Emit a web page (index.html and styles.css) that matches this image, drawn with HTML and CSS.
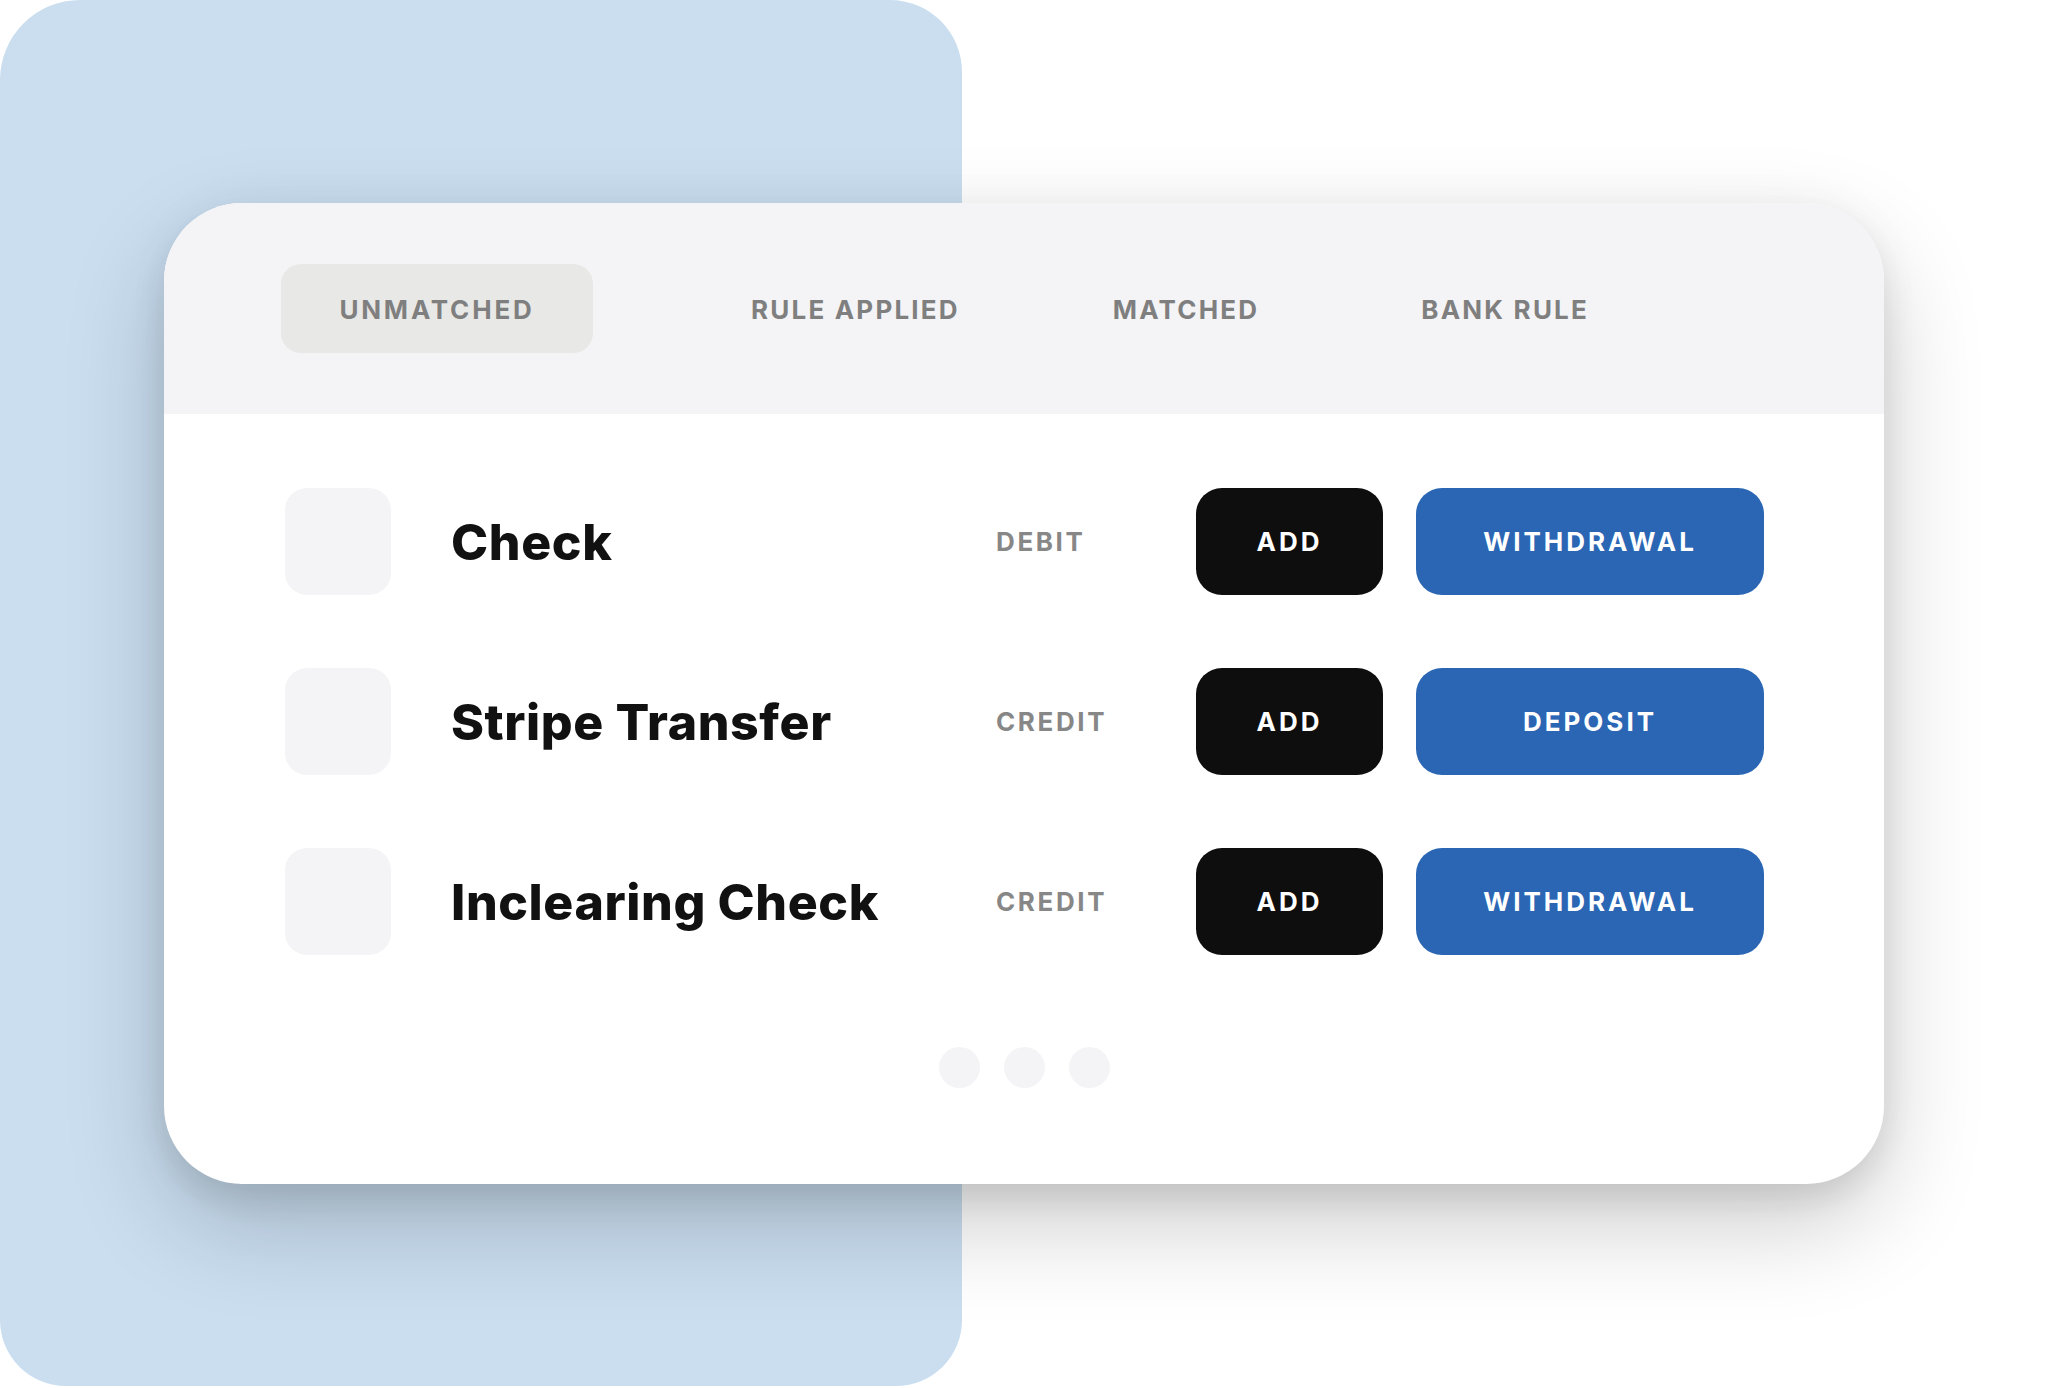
FILE: index.html
```html
<!DOCTYPE html>
<html lang="en">
<head>
<meta charset="utf-8">
<title>Bank reconciliation</title>
<link rel="stylesheet" href="styles.css">
</head>
<body>
<div class="stage">
  <div class="backdrop"></div>
  <section class="card">
    <header class="tabs">
      <div class="tab active">UNMATCHED</div>
      <div class="tab">RULE APPLIED</div>
      <div class="tab">MATCHED</div>
      <div class="tab">BANK RULE</div>
    </header>
    <div class="list">
      <div class="row">
        <div class="check"></div>
        <div class="title">Check</div>
        <div class="kind">DEBIT</div>
        <div class="btn btn-add">ADD</div>
        <div class="btn btn-main">WITHDRAWAL</div>
      </div>
      <div class="row">
        <div class="check"></div>
        <div class="title">Stripe Transfer</div>
        <div class="kind">CREDIT</div>
        <div class="btn btn-add">ADD</div>
        <div class="btn btn-main">DEPOSIT</div>
      </div>
      <div class="row">
        <div class="check"></div>
        <div class="title">Inclearing Check</div>
        <div class="kind">CREDIT</div>
        <div class="btn btn-add">ADD</div>
        <div class="btn btn-main">WITHDRAWAL</div>
      </div>
    </div>
    <div class="dots">
      <span class="dot"></span>
      <span class="dot"></span>
      <span class="dot"></span>
    </div>
  </section>
</div>
</body>
</html>
```

FILE: styles.css
```css
html, body {
  margin: 0;
  padding: 0;
  background: #ffffff;
}

body {
  width: 2048px;
  height: 1388px;
  overflow: hidden;
  font-family: "Inter", "Liberation Sans", sans-serif;
}

.stage {
  display: grid;
  width: 2048px;
  height: 1388px;
}

.backdrop {
  grid-area: 1 / 1;
  width: 962px;
  height: 1386px;
  background: #cadef0;
  border-radius: 80px 72px 66px 66px;
}

.card {
  grid-area: 1 / 1;
  align-self: start;
  justify-self: start;
  margin-left: 164px;
  margin-top: 203px;
  width: 1720px;
  height: 981px;
  background: #ffffff;
  border-radius: 78px;
  overflow: hidden;
  box-shadow: 0 40px 100px rgba(0, 0, 0, 0.2), 0 16px 30px rgba(0, 0, 0, 0.07), 0 0 50px rgba(0, 0, 0, 0.03);
  display: flex;
  flex-direction: column;
}

.tabs {
  height: 211px;
  background: #f4f4f6;
  display: flex;
  align-items: center;
  padding-left: 117px;
  box-sizing: border-box;
}

.tab {
  font-size: 26px;
  font-weight: 700;
  letter-spacing: 2.2px;
  color: #7f7f7f;
  line-height: 1;
  margin-top: 2px;
}

.tab.active {
  width: 312px;
  height: 89px;
  margin-top: 0;
  border-radius: 20px;
  background: #e8e8e7;
  display: flex;
  align-items: center;
  justify-content: center;
  padding-top: 2px;
  box-sizing: border-box;
  letter-spacing: 2.8px;
}

.tab:nth-child(2) { margin-left: 158px; }
.tab:nth-child(3) { margin-left: 153px; }
.tab:nth-child(4) { margin-left: 162px; }

.list {
  display: flex;
  flex-direction: column;
  gap: 73px;
  padding-top: 74px;
  padding-left: 121px;
}

.row {
  display: flex;
  align-items: center;
  height: 107px;
}

.check {
  width: 106px;
  height: 107px;
  border-radius: 22px;
  background: #f4f4f6;
  margin-right: 60px;
  flex: none;
}

.title {
  width: 545px;
  font-size: 50px;
  font-weight: 800;
  letter-spacing: 0.6px;
  color: #111111;
  flex: none;
}

.kind {
  width: 200px;
  font-size: 26px;
  font-weight: 700;
  letter-spacing: 2.6px;
  color: #878787;
  flex: none;
}

.btn {
  height: 107px;
  border-radius: 26px;
  display: flex;
  align-items: center;
  justify-content: center;
  color: #ffffff;
  font-size: 26px;
  font-weight: 700;
  letter-spacing: 3px;
  flex: none;
}

.btn-add {
  width: 187px;
  background: #0e0e0e;
  margin-right: 33px;
}

.btn-main {
  width: 348px;
  background: #2a66b4;
}

.dots {
  display: flex;
  justify-content: center;
  gap: 24px;
  margin-top: 92px;
}

.dot {
  width: 41px;
  height: 41px;
  border-radius: 50%;
  background: #f4f4f6;
}
```
